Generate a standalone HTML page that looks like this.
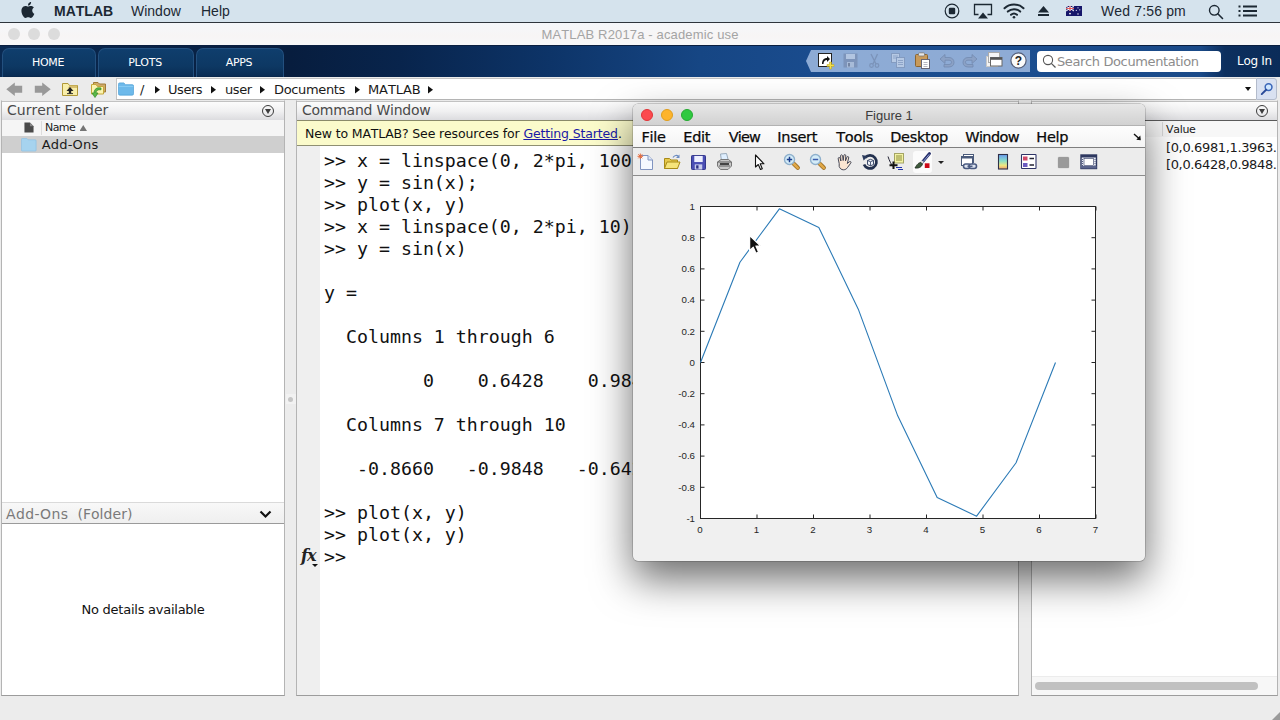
<!DOCTYPE html>
<html>
<head>
<meta charset="utf-8">
<title>MATLAB R2017a</title>
<style>
*{box-sizing:border-box;margin:0;padding:0}
html,body{width:1280px;height:720px;overflow:hidden;background:#ececec}
body{font-family:"DejaVu Sans","Liberation Sans",sans-serif;color:#1a1a1a;position:relative;font-kerning:none}
.abs,.abs>*{position:absolute}
.sf{font-family:"Liberation Sans",sans-serif}
.mono{font-family:"DejaVu Sans Mono","Liberation Mono",monospace}
.t{white-space:pre;line-height:1}
/* mac menubar */
#menubar{left:0;top:0;width:1280px;height:23px;background:#d5e3ed;border-bottom:1px solid #2e353c}
#menubar .mi{top:2px;font-size:14px;line-height:18px;color:#1c2833;white-space:nowrap}
/* title bar */
#titlebar{left:0;top:23px;width:1280px;height:22px;background:linear-gradient(#f5f7fa,#f7f5f5 60%,#f7f8f9)}
#titlebar .tt{left:0;width:1280px;top:4px;text-align:center;font-size:13px;line-height:15px;color:#a4a4a4;letter-spacing:0.150px}
.tl{width:12px;height:12px;border-radius:6px;background:#dcdcdc;top:5px}
/* toolstrip */
#strip{left:0;top:45px;width:1280px;height:32px;background:linear-gradient(90deg,#0a2a52 0px,#071d3e 290px,#08244c 400px,#0d3468 550px,#164684 700px,#1a4c8e 820px,#1b4e90 1000px,#1a4a88 1200px,#0c2f5e 1225px,#0b2c59 1280px);border-top:1px solid #0a1f40}
.tab{top:2px;height:30px;background:linear-gradient(#0f3e6d 0%,#0d3863 60%,#092c54 92%,#07203f 100%);border:1px solid #23507f;border-bottom:none;border-radius:7px 7px 0 0;color:#fff;font-size:11px;line-height:27px;text-align:center;letter-spacing:-0.300px;padding-right:2px}
/* address bar */
#addr{left:0;top:77px;width:1280px;height:24px;background:#ebebeb}
#path{left:116px;top:1px;width:1140px;height:22px;background:#fff;border:1px solid #c4c4c4;border-bottom-color:#b4b4b4;border-right:none}
.pc{top:3px;font-size:13px;line-height:15px;color:#1a1a1a;white-space:pre}
.arr{top:7px;width:5px;height:7.500px;background:#111;clip-path:polygon(0 0,100% 50%,0 100%)}
.fm{top:25.600px;font-size:14.500px;color:#0a0a0a;letter-spacing:-0.300px;-webkit-text-stroke:0.250px #0a0a0a}
/* panels */
.panel{background:#fff;border:1px solid #b4b4b4;border-top-color:#eaeaea;border-bottom-color:#9c9c9c}
.ptitle{left:0;top:0;height:19px;background:linear-gradient(#c2c2c2 0,#c2c2c2 1px,#fcfcfc 1px,#f0f0f1 55%,#dcdcdf 100%);font-size:14px;line-height:19px;color:#4a4a4a;white-space:pre}
.circ{width:12px;height:12px;border:1.300px solid #3c3c3c;border-radius:6px;top:4px}
.circ:after{content:"";position:absolute;left:1.700px;top:3.200px;border-top:5px solid #3c3c3c;border-left:3.5px solid transparent;border-right:3.5px solid transparent}
#status{left:0;top:696px;width:1280px;height:24px;background:#ececec}
</style>
</head>
<body>
<!-- mac menubar -->
<div id="menubar" class="abs sf">
  <svg style="left:20.500px;top:1px" width="16" height="18" viewBox="0 0 16 18"><path d="M11.2 9.500c0-2 1.600-2.900 1.700-3-0.900-1.400-2.400-1.500-2.900-1.600-1.200-0.100-2.400 0.700-3 0.700-0.600 0-1.600-0.700-2.600-0.700-1.300 0-2.600 0.800-3.300 2-1.400 2.400-0.400 6 1 8 0.700 1 1.500 2 2.500 2 1 0 1.400-0.600 2.600-0.600 1.200 0 1.500 0.600 2.600 0.600 1.100 0 1.800-1 2.400-1.900 0.800-1.100 1.100-2.200 1.100-2.200 0 0-2.100-0.800-2.100-3.300zM9.300 3.400c0.500-0.700 0.900-1.600 0.800-2.500-0.800 0-1.700 0.500-2.300 1.200-0.500 0.600-0.900 1.500-0.800 2.400 0.900 0.100 1.800-0.400 2.300-1.100z" fill="#1c2833"/></svg>
  <div class="mi" style="left:54px;font-weight:bold">MATLAB</div>
  <div class="mi" style="left:131px">Window</div>
  <div class="mi" style="left:201px">Help</div>
  <div class="mi" style="left:1101px;letter-spacing:0.150px">Wed 7:56 pm</div>
  <!-- status icons -->
  <svg style="left:944px;top:3px" width="16" height="16" viewBox="0 0 16 16"><circle cx="8" cy="8" r="6.800" fill="none" stroke="#1c2833" stroke-width="1.200"/><rect x="4.800" y="4.800" width="6.400" height="6.400" rx="1.200" fill="#1c2833"/></svg>
  <svg style="left:973px;top:3px" width="20" height="16" viewBox="0 0 20 16"><path d="M5.500 11.500H1.500V1.500H18.500V11.500H14.500" fill="none" stroke="#1c2833" stroke-width="1.300"/><path d="M10 9.500L15 15.500H5Z" fill="#1c2833"/></svg>
  <svg style="left:1003px;top:2px" width="22" height="17" viewBox="0 0 22 17"><g fill="none" stroke="#1c2833" stroke-width="2" stroke-linecap="round"><path d="M1.500 6.200C6.800 1.200 15.200 1.200 20.500 6.200"/><path d="M4.800 9.600C8.300 6.300 13.700 6.300 17.200 9.600"/><path d="M8 12.800C9.700 11.300 12.300 11.300 14 12.800"/></g><circle cx="11" cy="15.200" r="1.300" fill="#1c2833"/></svg>
  <svg style="left:1037px;top:5px" width="13" height="12" viewBox="0 0 13 12"><path d="M6.500 1L12 7.500H1Z" fill="#1c2833"/><rect x="1" y="9" width="11" height="2" fill="#1c2833"/></svg>
  <svg style="left:1066px;top:6px" width="16" height="10" viewBox="0 0 16 10"><rect width="16" height="10" fill="#16166a"/><path d="M0 0L8 5M8 0L0 5" stroke="#fff" stroke-width="1"/><path d="M4 0V5M0 2.500H8" stroke="#fff" stroke-width="1.400"/><path d="M4 0V5M0 2.500H8" stroke="#d22" stroke-width="0.700"/><g fill="#fff"><circle cx="4" cy="7.600" r="0.900"/><circle cx="12" cy="1.800" r="0.600"/><circle cx="10.300" cy="4.300" r="0.600"/><circle cx="13.800" cy="3.800" r="0.600"/><circle cx="12" cy="8" r="0.700"/></g></svg>
  <svg style="left:1208px;top:4px" width="16" height="16" viewBox="0 0 16 16"><circle cx="6.300" cy="6.300" r="4.800" fill="none" stroke="#1c2833" stroke-width="1.400"/><path d="M9.800 9.800L14.500 14.500" stroke="#1c2833" stroke-width="1.600" stroke-linecap="round"/></svg>
  <svg style="left:1238px;top:5px" width="20" height="12" viewBox="0 0 20 12"><g fill="#1c2833"><rect x="0.500" y="0.500" width="2" height="2"/><rect x="0.500" y="5" width="2" height="2"/><rect x="0.500" y="9.500" width="2" height="2"/><rect x="5" y="0.500" width="14" height="2"/><rect x="5" y="5" width="14" height="2"/><rect x="5" y="9.500" width="14" height="2"/></g></svg>
</div>
<!-- title bar -->
<div id="titlebar" class="abs sf">
  <div class="tt">MATLAB R2017a - academic use</div>
  <div class="tl" style="left:8px"></div><div class="tl" style="left:28px"></div><div class="tl" style="left:48px"></div>
</div>
<!-- toolstrip -->
<div id="strip" class="abs">
  <div class="tab" style="left:2px;width:94px">HOME</div>
  <div class="tab" style="left:98px;width:96px">PLOTS</div>
  <div class="tab" style="left:196px;width:88px">APPS</div>
  <svg style="left:806px;top:4px" width="226" height="24" viewBox="0 0 226 24"><path d="M0 11L5 0H224V22H5Z" fill="#a2bce2" fill-opacity="0.850"/></svg>
  <!-- shortcut icon -->
  <svg style="left:818px;top:7px" width="17" height="17" viewBox="0 0 17 17"><rect x="0.500" y="0.500" width="13" height="13" fill="#fff" stroke="#222" stroke-width="1"/><path d="M4 11C4 7 6 5 9 5V3L12 6L9 9V7C7 7 5.500 8.500 5.500 11Z" fill="#111"/><path d="M9 11.500H11.500V9H13.500V11.500H16V13.500H13.500V16H11.500V13.500H9Z" fill="#f4e04a" stroke="#b8a020" stroke-width="0.500"/></svg>
  <!-- save (disabled) -->
  <svg style="left:843px;top:7px" width="15" height="15" viewBox="0 0 15 15" opacity="0.450"><rect x="0.500" y="0.500" width="14" height="14" fill="#6a7a9a"/><rect x="3" y="1" width="9" height="5" fill="#dfe6f0"/><rect x="4" y="9" width="7" height="5.500" fill="#c8d0dc"/><rect x="5" y="10" width="2" height="3.500" fill="#556"/></svg>
  <!-- cut -->
  <svg style="left:867px;top:7px" width="15" height="15" viewBox="0 0 15 15" opacity="0.400"><path d="M10.500 1L6 11M4 1L9 11" stroke="#607090" stroke-width="1.300" fill="none"/><circle cx="4.500" cy="12.500" r="1.800" fill="none" stroke="#607090" stroke-width="1.200"/><circle cx="10" cy="12.500" r="1.800" fill="none" stroke="#607090" stroke-width="1.200"/></svg>
  <!-- copy -->
  <svg style="left:891px;top:7px" width="15" height="15" viewBox="0 0 15 15" opacity="0.450"><rect x="0.500" y="0.500" width="8" height="9" fill="#e8eef8" stroke="#7888a8"/><rect x="5.500" y="4.500" width="8" height="10" fill="#e8eef8" stroke="#7888a8"/><path d="M2 3H7M2 5H5M7 7.500H12M7 9.500H12M7 11.500H12" stroke="#7888a8" stroke-width="0.800"/></svg>
  <!-- paste -->
  <svg style="left:915px;top:6px" width="16" height="17" viewBox="0 0 16 17"><rect x="0.500" y="2.500" width="12" height="12" rx="1" fill="#c89a5a" stroke="#8a6430"/><rect x="3.500" y="0.800" width="6" height="3.200" rx="1" fill="#e8e8e8" stroke="#777" stroke-width="0.800"/><rect x="6.500" y="7.500" width="8" height="9" fill="#fff" stroke="#667"/><path d="M8.500 10.500H12.500M8.500 12.500H12.500M8.500 14.500H12.500" stroke="#889" stroke-width="0.600"/></svg>
  <!-- undo -->
  <svg style="left:938.500px;top:8px" width="16" height="14" viewBox="0 0 16 14" opacity="0.550"><path d="M1 5L6 0.500V3.500H10C13 3.500 15 5.500 15 8.500C15 11 13 13 10 13H5V10.500H10C11.500 10.500 12.500 9.500 12.500 8.300C12.500 7 11.500 6.200 10 6.200H6V9.500Z" fill="#8a9ab8" stroke="#56688c" stroke-width="0.700"/></svg>
  <!-- redo -->
  <svg style="left:961.500px;top:8px" width="16" height="14" viewBox="0 0 16 14" opacity="0.550"><path d="M15 5L10 0.500V3.500H6C3 3.500 1 5.500 1 8.500C1 11 3 13 6 13H11V10.500H6C4.500 10.500 3.500 9.500 3.500 8.300C3.500 7 4.500 6.200 6 6.200H10V9.500Z" fill="#8a9ab8" stroke="#56688c" stroke-width="0.700"/></svg>
  <!-- windows -->
  <svg style="left:986px;top:6px" width="17" height="17" viewBox="0 0 17 17"><rect x="0.500" y="4.500" width="11" height="10" fill="#f2f2f2" stroke="#c8c8c8"/><rect x="2.500" y="0.500" width="11" height="10" fill="#f6f6f6" stroke="#aaa"/><rect x="4.500" y="5.500" width="11.500" height="8.500" fill="#fff" stroke="#666"/><rect x="4.500" y="5.500" width="11.500" height="2.300" fill="#555"/></svg>
  <!-- help -->
  <svg style="left:1010px;top:6px" width="17" height="17" viewBox="0 0 17 17"><circle cx="8.500" cy="8.500" r="7.600" fill="#fafafa" stroke="#56607a" stroke-width="1.200"/><text x="8.500" y="12.800" font-family="Liberation Sans, sans-serif" font-weight="bold" font-size="12" text-anchor="middle" fill="#222">?</text></svg>
  <div style="left:1037px;top:5px;width:184px;height:21px;background:#fff;border-radius:4px"></div>
  <svg style="left:1042px;top:8px" width="15" height="15" viewBox="0 0 15 15"><circle cx="6" cy="6" r="4.600" fill="none" stroke="#555" stroke-width="1.100"/><path d="M9.300 9.300L13.500 13.500" stroke="#555" stroke-width="1.200"/></svg>
  <div class="t" style="left:1057px;top:9px;font-size:13px;color:#8c8c8c;letter-spacing:-0.380px">Search Documentation</div>
  <div class="t" style="left:1237px;top:9.300px;font-size:12px;color:#fff;letter-spacing:-0.300px">Log In</div>
</div>
<!-- address -->
<div id="addr" class="abs">
  <div id="path" class="abs">
    <svg style="left:1px;top:3px" width="16" height="14" viewBox="0 0 18 16" preserveAspectRatio="none"><path d="M0.500 2.500Q0.500 1 2 1H6.500L8.500 3H16Q17.500 3 17.500 4.500V13.500Q17.500 15 16 15H2Q0.500 15 0.500 13.500Z" fill="#6db9ea" stroke="#4d9fd6" stroke-width="0.800"/><path d="M0.800 5H17.200" stroke="#8fd0f6" stroke-width="1"/></svg>
    <div class="pc" style="left:23px">/</div>
    <div class="arr" style="left:38px"></div>
    <div class="pc" style="left:51px;letter-spacing:-0.450px">Users</div>
    <div class="arr" style="left:94px"></div>
    <div class="pc" style="left:108px;letter-spacing:-0.400px">user</div>
    <div class="arr" style="left:143px"></div>
    <div class="pc" style="left:157px;letter-spacing:-0.350px">Documents</div>
    <div class="arr" style="left:238px"></div>
    <div class="pc" style="left:251px;letter-spacing:-0.100px">MATLAB</div>
    <div class="arr" style="left:311px"></div>
    <div style="left:1128px;top:8px;width:0;height:0;border-top:4px solid #111;border-left:3.500px solid transparent;border-right:3.500px solid transparent"></div>
  </div>
  <svg style="left:6px;top:5px" width="17" height="15" viewBox="0 0 17 15"><path d="M0.300 7.300L8.800 0.500V3.800H16.200V10.800H8.800V14.100Z" fill="#999"/></svg>
  <svg style="left:34px;top:5px" width="17" height="15" viewBox="0 0 17 15"><path d="M16.700 7.300L8.200 0.500V3.800H0.800V10.800H8.200V14.100Z" fill="#999"/></svg>
  <svg style="left:62px;top:5px" width="17" height="15" viewBox="0 0 17 15"><path d="M0.500 1.500H6L7.500 3.500H15.500V13.500H0.500Z" fill="#f8eeaa" stroke="#b09838"/><path d="M7.500 3.500H15V6H6Z" fill="#d8c070"/><path d="M8 5L11.500 9H9.200V11.500H6.800V9H4.500Z" fill="#222"/><rect x="5" y="11.200" width="6" height="0.900" fill="#222"/></svg>
  <svg style="left:89px;top:4px" width="18" height="18" viewBox="0 0 18 18"><path d="M4.500 1.500H9L10.500 3H16.500V11H4.500Z" fill="#d0aa68" stroke="#a07c38"/><path d="M2.500 3.500H7L8.500 5.500H14.500V13H2.500Z" fill="#fbf3b0" stroke="#c4a83a"/><path d="M12 7C8 6 5 8 5 12H3L6 16.500L9 12H7C7 9.500 9 8.200 12 8.800Z" fill="#5cb84a" stroke="#2e8a24" stroke-width="0.700"/></svg>
  <div style="left:1256px;top:1px;width:21px;height:22px;background:#d9e1f1;border:1px solid #b4bccc;border-radius:0 3px 3px 0"></div>
  <svg style="left:1260px;top:5px" width="14" height="14" viewBox="0 0 16 16"><circle cx="9.800" cy="5.800" r="3.900" fill="#cfe6ff" stroke="#3a66b8" stroke-width="1.700"/><path d="M7 8.800L2 13.800" stroke="#2a4a98" stroke-width="2.200" stroke-linecap="round"/></svg>
</div>
<!-- Current Folder panel -->
<div class="abs panel" id="cf" style="left:1px;top:100px;width:284px;height:596px">
  <div class="ptitle" style="width:282px"><span style="position:absolute;left:5px;top:0">Current Folder</span></div>
  <div class="circ" style="left:260px"></div>
  <div style="left:0;top:19px;width:282px;height:16px;background:#f5f5f5"></div>
  <svg style="left:22px;top:21px" width="10" height="11" viewBox="0 0 11 12"><path d="M0.500 0.500H6.500L10.500 4.500V11.500H0.500Z" fill="#4a4a4a"/><path d="M6.500 0.500V4.500H10.500Z" fill="#888"/></svg>
  <div style="left:39px;top:20px;width:1px;height:14px;background:#dcdcdc"></div>
  <div class="t" style="left:43px;top:21px;font-size:11px;letter-spacing:-0.550px">Name</div>
  <div style="left:77.500px;top:24px;width:7.500px;height:6px;background:#757575;clip-path:polygon(50% 0,100% 100%,0 100%)"></div>
  <div style="left:0;top:35px;width:282px;height:17px;background:#cfcfcf"></div>
  <svg style="left:19px;top:37px" width="16" height="13.500" viewBox="0 0 18 15" preserveAspectRatio="none"><path d="M0.500 1.500Q0.500 0.500 1.500 0.500H6.500L8 2H16Q17 2 17 3V13.500Q17 14.500 16 14.500H1.500Q0.500 14.500 0.500 13.500Z" fill="#a6d3ef" stroke="#8fc2e4" stroke-width="0.800"/></svg>
  <div class="t" style="left:39.700px;top:37px;font-size:13px;letter-spacing:0.200px">Add-Ons</div>
  <!-- details -->
  <div style="left:0;top:401px;width:282px;height:22px;background:linear-gradient(#f8f8f8,#efefef);border-top:1px solid #dadada;border-bottom:1px solid #9a9a9a"></div>
  <div class="t" style="left:4px;top:405.600px;font-size:14px;color:#7a7a7a;letter-spacing:0.050px"><span style="letter-spacing:0.400px">Add-Ons</span>  (Folder)</div>
  <svg style="left:256.500px;top:408.500px" width="13" height="9" viewBox="0 0 13 9"><path d="M1.500 1.500L6.500 6.500L11.500 1.500" fill="none" stroke="#111" stroke-width="2.200"/></svg>
  <div class="t" style="left:0;top:501.800px;width:282px;text-align:center;font-size:13px;letter-spacing:-0.250px;color:#111">No details available</div>
</div>
<!-- splitter dot -->
<div class="abs" style="left:286px;top:394px;width:10px;height:10px;background:#f2f2f2"></div><div class="abs" style="left:287.500px;top:396.500px;width:5px;height:5px;border-radius:3px;background:#c6c6c6"></div>
<!-- Command Window panel -->
<div class="abs panel" id="cw" style="left:296px;top:100px;width:723px;height:596px">
  <div class="ptitle" style="width:721px"><span style="position:absolute;left:5px;top:0;letter-spacing:-0.250px">Command Window</span></div>
  <div style="left:0;top:19px;width:721px;height:26px;background:#fbfbcb;border-top:1px solid #8a8a6a;border-bottom:1px solid #8f8f72"></div>
  <div class="t" style="left:8px;top:26.500px;font-size:12.500px;letter-spacing:-0.140px;color:#111">New to MATLAB? See resources for <span style="color:#1a1aa6;text-decoration:underline">Getting Started</span>.</div>
  <div style="left:0;top:45px;width:23px;height:549px;background:#efefef"></div>
  <pre class="mono" style="left:27px;top:49px;font-size:18.250px;line-height:22px;color:#111">&gt;&gt; x = linspace(0, 2*pi, 100);
&gt;&gt; y = sin(x);
&gt;&gt; plot(x, y)
&gt;&gt; x = linspace(0, 2*pi, 10)
&gt;&gt; y = sin(x)

y =

  Columns 1 through 6

         0    0.6428    0.9848    0.8660    0.3420   -0.3420

  Columns 7 through 10

   -0.8660   -0.9848   -0.6428   -0.0000

&gt;&gt; plot(x, y)
&gt;&gt; plot(x, y)
&gt;&gt; </pre>
  <div class="t" style="left:4px;top:447px;font-family:'DejaVu Serif','Liberation Serif',serif;font-style:italic;font-weight:bold;font-size:16px;color:#222;letter-spacing:-1px">fx</div>
  <div style="left:15px;top:463px;width:0;height:0;border-top:3px solid #111;border-left:3px solid transparent;border-right:3px solid transparent"></div>
</div>
<!-- Workspace panel -->
<div class="abs panel" id="ws" style="left:1031px;top:100px;width:247px;height:596px;overflow:hidden">
  <div class="ptitle" style="width:245px"><span style="position:absolute;left:5px;top:0">Workspace</span></div>
  <div class="circ" style="left:224px"></div>
  <div style="left:0;top:19px;width:245px;height:1px;background:#5a5a5a"></div>
  <div style="left:0;top:20px;width:245px;height:16px;background:#f7f7f7"></div>
  <div style="left:130px;top:21px;width:1px;height:14px;background:#d8d8d8"></div>
  <div class="t" style="left:134px;top:23px;font-size:11px;letter-spacing:-0.300px">Value</div>
  <div class="t" style="left:134px;top:39.500px;font-size:13px;letter-spacing:-0.360px">[0,0.6981,1.3963...</div>
  <div class="t" style="left:134px;top:56.500px;font-size:13px;letter-spacing:-0.360px">[0,0.6428,0.9848...</div>
  <div style="left:0;top:575px;width:245px;height:19px;background:#f7f7f7;border-top:1px solid #ececec"></div>
  <div style="left:3px;top:581px;width:223px;height:8px;border-radius:4px;background:#c1c1c1"></div>
</div>
<div id="status" class="abs"><svg style="left:1272px;top:16px" width="8" height="8" viewBox="0 0 8 8"><path d="M8 0V8H0Z" fill="#9a9a9a"/></svg></div>
<div class="abs" id="fig" style="left:633px;top:104px;width:512px;height:457px;border-radius:5px;background:#f0f0f0;box-shadow:0 18px 40px 0 rgba(0,0,0,0.58),0 0 0 0.5px rgba(0,0,0,0.3)">
  <div style="left:0;top:0;width:512px;height:22px;border-radius:5px 5px 0 0;background:linear-gradient(#e7e7e7,#d1d1d1);border-bottom:1px solid #b2b2b2"></div>
  <div style="left:8px;top:5px;width:12px;height:12px;border-radius:6px;background:#fc4a4f;border:0.500px solid #e03438"></div>
  <div style="left:28px;top:5px;width:12px;height:12px;border-radius:6px;background:#fdb42c;border:0.500px solid #e09e1c"></div>
  <div style="left:48px;top:5px;width:12px;height:12px;border-radius:6px;background:#2fc940;border:0.500px solid #24aa30"></div>
  <div class="t sf" style="left:0;top:5px;width:512px;text-align:center;font-size:13px;color:#3c3c3c">Figure 1</div>
  <!-- menu -->
  <div style="left:0;top:22px;width:512px;height:22px;background:linear-gradient(#fdfdfd,#f4f4f4);border-bottom:1px solid #7e7e7e"></div>
  <div class="t fm" style="left:8.500px">File</div>
  <div class="t fm" style="left:50.300px">Edit</div>
  <div class="t fm" style="left:95.800px;letter-spacing:-0.900px">View</div>
  <div class="t fm" style="left:144.300px">Insert</div>
  <div class="t fm" style="left:203.300px">Tools</div>
  <div class="t fm" style="left:257.200px">Desktop</div>
  <div class="t fm" style="left:332.200px;letter-spacing:-0.600px">Window</div>
  <div class="t fm" style="left:403.300px">Help</div>
  <svg style="left:500px;top:29px" width="9" height="8" viewBox="0 0 9 8"><path d="M1 1L6 5.500" stroke="#111" stroke-width="1.400"/><path d="M7.800 7.200L3.300 6.800L7.300 2.600Z" fill="#111"/></svg>
  <!-- toolbar -->
  <div style="left:0;top:44px;width:512px;height:28px;background:#ececec;border-bottom:1px solid #8c8c8c"></div>
  
  <!-- new -->
  <svg style="left:4px;top:49px" width="18" height="18" viewBox="0 0 18 18"><path d="M3.500 2.500H11L15.500 7V16.500H3.500Z" fill="#f4f8ff" stroke="#8094c0"/><path d="M11 2.500V7H15.500" fill="#dde6f6" stroke="#8094c0"/><path d="M3.300 0.500V6.100M0.500 3.300H6.100M1.300 1.300L5.300 5.300M5.300 1.300L1.300 5.300" stroke="#e66a3a" stroke-width="1"/></svg>
  <!-- open -->
  <svg style="left:30px;top:49px" width="18" height="18" viewBox="0 0 18 18"><path d="M1.500 15.500V5.500H6.500L8 7H14.500V15.500Z" fill="#e6c84a" stroke="#a88a18"/><path d="M1.500 15.500L4 9H17L14.500 15.500Z" fill="#f6e47a" stroke="#a88a18"/><path d="M10 4.500C11.500 2 14 2 15.500 3.500" fill="none" stroke="#6a8ac0" stroke-width="1.200"/><path d="M16.500 1.500V5H13Z" fill="#6a8ac0"/></svg>
  <!-- save -->
  <svg style="left:58px;top:50.500px" width="15" height="15" viewBox="0 0 16 16"><rect x="0.500" y="0.500" width="15" height="15" rx="1" fill="#4a4eb4" stroke="#2a2e84"/><rect x="3.500" y="1" width="9" height="6.500" fill="#eef0ff"/><rect x="4" y="10" width="8" height="5.500" fill="#c8ccec"/><rect x="5.500" y="11" width="2.500" height="3.500" fill="#2a2e84"/></svg>
  <!-- print -->
  <svg style="left:83px;top:49px" width="17" height="18" viewBox="0 0 17 18"><path d="M4.500 1L10.500 0.500L12.500 8H5.500Z" fill="#dfefff" stroke="#9ab"/><path d="M1.500 9L5 6.500H12.500L15.500 9V13L12 16.500H4.500L1.500 13Z" fill="#c8c8c8" stroke="#777"/><path d="M1.500 9H15.500M3 13H14" stroke="#555" stroke-width="0.900"/><rect x="4" y="10" width="9" height="2" fill="#444"/></svg>
  <!-- pointer -->
  <svg style="left:121px;top:50px" width="12" height="17" viewBox="0 0 12 17"><path d="M1.500 1V13L4.300 10.500L6.500 15.500L8.300 14.700L6.200 9.800H10Z" fill="#fff" stroke="#111" stroke-width="1.100" stroke-linejoin="round"/></svg>
  <!-- zoom in -->
  <svg style="left:150px;top:49px" width="18" height="18" viewBox="0 0 18 18"><path d="M10.500 10.500L14.800 14.800" stroke="#9a6c20" stroke-width="4.200" stroke-linecap="round"/><path d="M10.500 10.500L14.800 14.800" stroke="#e0a848" stroke-width="2.600" stroke-linecap="round"/><circle cx="6.500" cy="6.500" r="5" fill="#d4ecf8" stroke="#8fb0cc" stroke-width="1.400"/><path d="M6.500 3.800V9.200M3.800 6.500H9.200" stroke="#1c3c8c" stroke-width="1.500"/></svg>
  <!-- zoom out -->
  <svg style="left:176px;top:49px" width="18" height="18" viewBox="0 0 18 18"><path d="M10.500 10.500L14.800 14.800" stroke="#9a6c20" stroke-width="4.200" stroke-linecap="round"/><path d="M10.500 10.500L14.800 14.800" stroke="#e0a848" stroke-width="2.600" stroke-linecap="round"/><circle cx="6.500" cy="6.500" r="5" fill="#d4ecf8" stroke="#8fb0cc" stroke-width="1.400"/><path d="M3.800 6.500H9.200" stroke="#3c5cac" stroke-width="1.500"/></svg>
  <!-- pan hand -->
  <svg style="left:202px;top:49px" width="18" height="18" viewBox="0 0 18 18"><path d="M4.200 10.500L3.200 5.800C2.900 4.300 4.700 3.900 5.100 5.300L5.900 8L5.600 3C5.500 1.500 7.400 1.400 7.600 2.900L8.200 7.500L8.800 2.600C9 1.100 10.900 1.300 10.800 2.800L10.500 7.800L11.900 4.200C12.400 2.900 14.100 3.500 13.700 4.900L12.300 10.500L14.300 8.800C15.400 7.900 16.600 9.100 15.700 10.200L12.500 14.500C11.500 16 10.300 16.800 8.500 16.800C6.200 16.800 5 15.500 4.200 13.500Z" fill="#fbe6d2" stroke="#33384a" stroke-width="0.900" stroke-linejoin="round"/></svg>
  <!-- rotate -->
  <svg style="left:228px;top:49px" width="18" height="18" viewBox="0 0 18 18"><path d="M4.200 4.500A6.500 6.500 0 1 1 3 11.500" fill="none" stroke="#22304e" stroke-width="2.700"/><path d="M1 2L7 3.200L2.600 7.600Z" fill="#2a3a5c"/><path d="M6.500 7.500L9.500 6.300L12.500 7.500V11.500L9.500 12.800L6.500 11.500Z" fill="#eef2fa" stroke="#2a3a5c" stroke-width="0.900"/><path d="M6.500 7.500L9.500 8.800L12.500 7.500M9.500 8.800V12.800" fill="none" stroke="#2a3a5c" stroke-width="0.800"/></svg>
  <!-- data cursor -->
  <svg style="left:254px;top:48px" width="18" height="19" viewBox="0 0 18 19"><rect x="7.500" y="1.500" width="9" height="9.500" fill="#f2f2a4" stroke="#a4a464"/><path d="M9 4H15M9 6H15M9 8H15" stroke="#8c8c3c" stroke-width="1"/><path d="M1 4.500C2.500 9 4 12 6 14.500" fill="none" stroke="#223" stroke-width="1"/><path d="M6.500 9.500V17M2.500 13.300H10.500" stroke="#111" stroke-width="2"/><path d="M9 15.500H15M11 17.500H16" stroke="#2233aa" stroke-width="1"/></svg>
  <!-- brush (selected) -->
  <div style="left:280px;top:47px;width:19px;height:22px;background:#fbfbfb;border-radius:3px"></div>
  <svg style="left:281px;top:48px" width="18" height="19" viewBox="0 0 18 19"><path d="M15.500 1.500L8 10.500" stroke="#27306a" stroke-width="2.800" stroke-linecap="round"/><path d="M15.300 2.300L9.300 9.500" stroke="#9aa8e0" stroke-width="0.900"/><path d="M8.800 9.200L6.700 11.700" stroke="#ddd" stroke-width="2.800"/><path d="M7 10.500C5 10.500 3 12 1 16C4 16.500 7.500 15.500 8.500 12Z" fill="#3e5a3c" stroke="#1e2a1e" stroke-width="0.800"/><rect x="10.800" y="11.300" width="4.700" height="4.700" fill="#cc0818"/></svg>
  <div style="left:305px;top:57px;width:0;height:0;border-top:3.500px solid #222;border-left:3px solid transparent;border-right:3px solid transparent"></div>
  <!-- link -->
  <svg style="left:327px;top:49px" width="18" height="18" viewBox="0 0 18 18"><rect x="3.500" y="1.500" width="10" height="8" fill="#fff" stroke="#4a5a7a"/><rect x="1.500" y="3.500" width="11" height="9" fill="#fff" stroke="#4a5a7a"/><rect x="1.500" y="3.500" width="11" height="2" fill="#4a5a7a"/><rect x="3.500" y="11" width="7" height="4.500" rx="2.200" fill="#dde4f0" stroke="#4a5a80" stroke-width="1.600"/><rect x="9" y="11" width="7.500" height="4.500" rx="2.200" fill="#dde4f0" stroke="#4a5a80" stroke-width="1.600"/><path d="M7.500 13.300H12.500" stroke="#4a5a80" stroke-width="1.600"/></svg>
  <!-- colorbar -->
  <svg style="left:364px;top:49px" width="12" height="18" viewBox="0 0 12 18"><defs><linearGradient id="cb" x1="0" y1="0" x2="0" y2="1"><stop offset="0" stop-color="#6a9af0"/><stop offset="0.450" stop-color="#8ae0c8"/><stop offset="0.750" stop-color="#f0e880"/><stop offset="1" stop-color="#f0a070"/></linearGradient></defs><rect x="1.500" y="1.500" width="9" height="14.500" fill="url(#cb)" stroke="#2e3048" stroke-width="1.100"/></svg>
  <!-- legend -->
  <svg style="left:387px;top:49px" width="18" height="18" viewBox="0 0 18 18"><rect x="1.500" y="1.500" width="14.500" height="14" rx="0.500" fill="#fff" stroke="#2e3468" stroke-width="1.100"/><rect x="3" y="3.500" width="4.500" height="4" fill="#d04a6a"/><rect x="3" y="10" width="4.500" height="4" fill="#6a5ac0"/><path d="M9.500 5.500H14M9.500 12H14" stroke="#223" stroke-width="1.300"/></svg>
  <!-- gray square -->
  <div style="left:425px;top:53px;width:11px;height:11px;background:#9a9a9a;border-radius:1.500px;box-shadow:0 0 1px #888"></div>
  <!-- window icon -->
  <svg style="left:447px;top:50px" width="18" height="16" viewBox="0 0 18 16"><rect x="1" y="1" width="15.500" height="13.500" fill="#e8ecf6" stroke="#2e3860" stroke-width="1.400"/><rect x="1" y="1" width="15.500" height="2.500" fill="#2e3860"/><rect x="4" y="4.500" width="9.500" height="7" fill="#fff" stroke="#2e3860" stroke-width="0.600"/><path d="M2.500 5V12M15 5V12" stroke="#2e3860" stroke-width="0.800" stroke-dasharray="1 1"/><rect x="1" y="12" width="15.500" height="2.500" fill="#5a648c"/></svg>

  <!-- axes -->
  <svg style="left:0;top:0" width="512" height="457" viewBox="0 0 512 457" font-family="Liberation Sans, sans-serif" font-size="9.700" fill="#262626">
    <rect x="67.5" y="102.5" width="395.0" height="312.0" fill="#fff" stroke="#262626" stroke-width="1"/>
    <g stroke="#262626" stroke-width="1" fill="none"><path d="M67.50 414.5v-4M67.50 102.5v4"/><path d="M124.00 414.5v-4M124.00 102.5v4"/><path d="M180.50 414.5v-4M180.50 102.5v4"/><path d="M237.00 414.5v-4M237.00 102.5v4"/><path d="M293.50 414.5v-4M293.50 102.5v4"/><path d="M350.00 414.5v-4M350.00 102.5v4"/><path d="M406.50 414.5v-4M406.50 102.5v4"/><path d="M463.00 414.5v-4M463.00 102.5v4"/><path d="M67.5 414.50h4M462.5 414.50h-4"/><path d="M67.5 383.30h4M462.5 383.30h-4"/><path d="M67.5 352.10h4M462.5 352.10h-4"/><path d="M67.5 320.90h4M462.5 320.90h-4"/><path d="M67.5 289.70h4M462.5 289.70h-4"/><path d="M67.5 258.50h4M462.5 258.50h-4"/><path d="M67.5 227.30h4M462.5 227.30h-4"/><path d="M67.5 196.10h4M462.5 196.10h-4"/><path d="M67.5 164.90h4M462.5 164.90h-4"/><path d="M67.5 133.70h4M462.5 133.70h-4"/><path d="M67.5 102.50h4M462.5 102.50h-4"/></g>
    <text x="67.00" y="428.9" text-anchor="middle">0</text><text x="123.50" y="428.9" text-anchor="middle">1</text><text x="180.00" y="428.9" text-anchor="middle">2</text><text x="236.50" y="428.9" text-anchor="middle">3</text><text x="293.00" y="428.9" text-anchor="middle">4</text><text x="349.50" y="428.9" text-anchor="middle">5</text><text x="406.00" y="428.9" text-anchor="middle">6</text><text x="462.50" y="428.9" text-anchor="middle">7</text><text x="62.0" y="417.80" text-anchor="end">-1</text><text x="62.0" y="386.60" text-anchor="end">-0.8</text><text x="62.0" y="355.40" text-anchor="end">-0.6</text><text x="62.0" y="324.20" text-anchor="end">-0.4</text><text x="62.0" y="293.00" text-anchor="end">-0.2</text><text x="62.0" y="261.80" text-anchor="end">0</text><text x="62.0" y="230.60" text-anchor="end">0.2</text><text x="62.0" y="199.40" text-anchor="end">0.4</text><text x="62.0" y="168.20" text-anchor="end">0.6</text><text x="62.0" y="137.00" text-anchor="end">0.8</text><text x="62.0" y="105.80" text-anchor="end">1</text>
    <polyline points="67.50,258.50 106.94,158.23 146.39,104.87 185.83,123.40 225.28,205.14 264.72,311.86 304.17,393.60 343.61,412.13 383.06,358.77 422.50,258.50" fill="none" stroke="#2b7ab6" stroke-width="1.100" stroke-linejoin="round"/>
  </svg>
  <!-- cursor -->
  <svg style="left:115px;top:130px" width="15.400" height="22" viewBox="0 0 14 20"><path d="M1.500 1.500V15L4.800 12L7.200 17.500L9.600 16.400L7.200 11H11.500Z" fill="#111" stroke="#fff" stroke-width="1.100" stroke-linejoin="round"/></svg>
</div>
</body>
</html>
